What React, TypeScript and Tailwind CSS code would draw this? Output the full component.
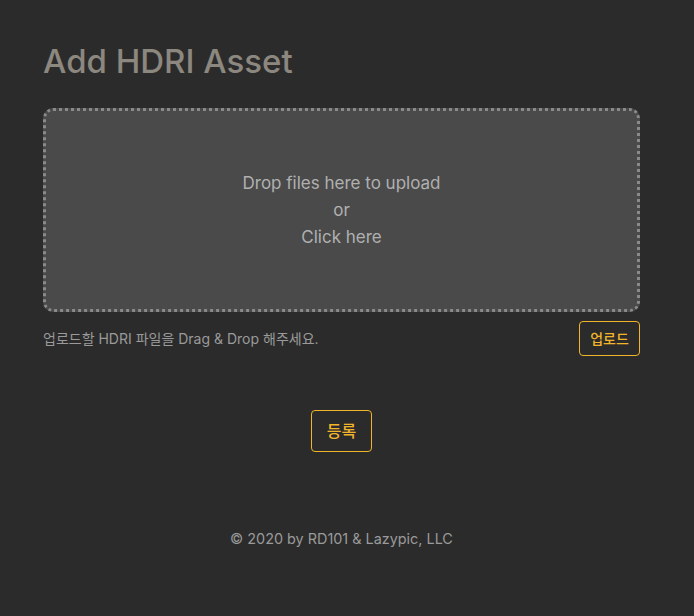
export default function App() {
  return (
    <div
      className="min-h-[616px] bg-[#2b2b2b] pl-[43px] pr-[54px] pt-[40px]"
      style={{ fontFamily: 'Inter, "Noto Sans CJK KR", sans-serif' }}
    >
      <h1 className="text-[33px] font-medium leading-[42px] text-[#8c877f]">Add HDRI Asset</h1>

      <div className="mt-[26px] flex h-[204px] cursor-pointer flex-col items-center justify-center rounded-[10px] border-[3px] border-dotted border-[#8a8a8a] bg-[#4a4a4a] text-[17px] leading-[27px] text-[#b0b0b0]">
        <span>Drop files here to upload</span>
        <span>or</span>
        <span>Click here</span>
      </div>

      <div className="mt-[9px] flex items-center justify-between">
        <p className="text-[14px] text-[#9a9a9a]">업로드할 HDRI 파일을 Drag &amp; Drop 해주세요.</p>
        <button className="h-[35px] w-[61px] rounded-[4px] border border-[#f0b52b] text-[14px] font-medium text-[#f0b52b]">
          업로드
        </button>
      </div>

      <div className="mt-[54px] flex justify-center">
        <button className="h-[42px] w-[61px] rounded-[4px] border border-[#f0b52b] text-[16px] font-medium text-[#f0b52b]">
          등록
        </button>
      </div>

      <footer className="mt-[76px] text-center text-[14.4px] text-[#9a9a9a]">© 2020 by RD101 &amp; Lazypic, LLC</footer>
    </div>
  );
}
